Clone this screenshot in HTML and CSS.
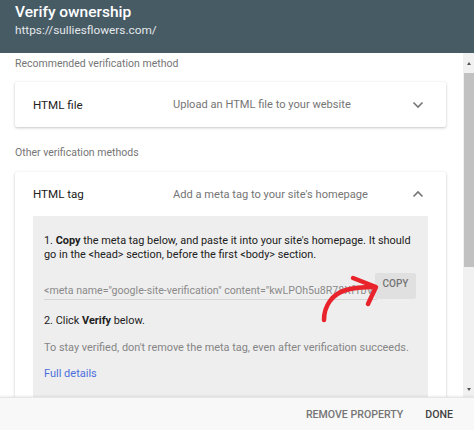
FILE: index.html
```html
<!DOCTYPE html>
<html>
<head>
<meta charset="utf-8">
<link rel="stylesheet" href="styles.css">
</head>
<body>
<div class="dialog">
  <header class="header">
    <div class="title">Verify ownership</div>
    <div class="subtitle">https://sulliesflowers.com/</div>
  </header>
  <div class="main">
    <div class="content">
      <div class="section-label">Recommended verification method</div>
      <div class="card">
        <div class="card-head">
          <span class="method">HTML file</span>
          <span class="desc">Upload an HTML file to your website</span>
          <svg class="chev" width="12" height="8" viewBox="0 0 12 8"><path d="M1.5 1.5 L6 6 L10.5 1.5" fill="none" stroke="#757575" stroke-width="1.6"/></svg>
        </div>
      </div>
      <div class="section-label second">Other verification methods</div>
      <div class="card open">
        <div class="card-head">
          <span class="method">HTML tag</span>
          <span class="desc">Add a meta tag to your site's homepage</span>
          <svg class="chev" width="12" height="8" viewBox="0 0 12 8"><path d="M1.5 6.5 L6 2 L10.5 6.5" fill="none" stroke="#757575" stroke-width="1.6"/></svg>
        </div>
        <div class="panel">
          <p class="step">1. <b>Copy</b> the meta tag below, and paste it into your site's homepage. It should go in the &lt;head&gt; section, before the first &lt;body&gt; section.</p>
          <div class="copy-row">
            <div class="field">&lt;meta name="google-site-verification" content="kwLPOh5u8R78Xf1bV0lqT" /&gt;</div>
            <button class="copy">COPY</button>
            <svg class="arrow" width="70" height="50" viewBox="0 0 70 50"><path d="M12 46 C12 32 20 20 34 16 C44 13 54 13 62 13" fill="none" stroke="#e8232b" stroke-width="4.5" stroke-linecap="round"/><path d="M41 4 L64 13 L56 30" fill="none" stroke="#e8232b" stroke-width="4.5" stroke-linecap="round" stroke-linejoin="round"/></svg>
          </div>
          <p class="step">2. Click <b>Verify</b> below.</p>
          <p class="note">To stay verified, don't remove the meta tag, even after verification succeeds.</p>
          <a class="details">Full details</a>
        </div>
      </div>
    </div>
    <div class="scrollbar">
      <div class="sb-arrow up"></div>
      <div class="sb-thumb"></div>
      <div class="sb-space"></div>
      <div class="sb-arrow down"></div>
    </div>
  </div>
  <footer class="footer">
    <span class="btn">REMOVE PROPERTY</span>
    <span class="btn done">DONE</span>
  </footer>
</div>
</body>
</html>
```
FILE: styles.css
```css
html, body {
  margin: 0;
  padding: 0;
}
body {
  width: 474px;
  height: 430px;
  overflow: hidden;
  font-family: Roboto, "Liberation Sans", sans-serif;
  background: #fff;
}
.dialog {
  display: flex;
  flex-direction: column;
  height: 430px;
}
.header {
  height: 53px;
  flex: none;
  background: #475b65;
  padding: 2px 15px 0;
  box-sizing: border-box;
  color: #fff;
}
.title {
  font-size: 15.5px;
  font-weight: 500;
  line-height: 21px;
}
.subtitle {
  font-size: 11.8px;
  line-height: 15px;
  color: #e3e8ea;
}
.main {
  flex: 1;
  display: flex;
  overflow: hidden;
}
.content {
  flex: 1;
  padding: 4px 17px 0 15px;
  overflow: hidden;
}
.section-label {
  font-size: 10.5px;
  color: #757575;
  line-height: 14px;
  margin-bottom: 11px;
}
.section-label.second {
  margin-top: 19px;
  margin-bottom: 12px;
}
.card {
  background: #fff;
  border-radius: 2px;
  box-shadow: 0 1px 3px rgba(0,0,0,0.22), 0 0 1px rgba(0,0,0,0.08);
}
.card-head {
  display: grid;
  grid-template-columns: 140px 1fr auto;
  align-items: center;
  height: 45px;
  padding: 0 22px 0 18px;
}
.method {
  font-size: 11.6px;
  color: #212121;
}
.desc {
  font-size: 11.1px;
  color: #757575;
}
.chev {
  display: block;
}
.card.open .card-head {
  height: 44px;
}
.panel {
  margin: 0 18px;
  background: #eeeeee;
  padding: 18px 10px 14px 11px;
}
.step {
  margin: 0;
  font-size: 10.9px;
  line-height: 13.5px;
  color: #212121;
}
.step b {
  font-weight: 700;
}
.copy-row {
  position: relative;
  display: flex;
  align-items: flex-start;
  margin: 12px 2px 14px 0;
}
.field {
  flex: 1;
  overflow: hidden;
  white-space: nowrap;
  font-size: 10.6px;
  color: #8a8a8a;
  line-height: 14px;
  padding-top: 11px;
  border-bottom: 1px solid #d5d5d5;
  height: 15px;
  margin-right: -2px;
}
.copy {
  flex: none;
  width: 41px;
  height: 26px;
  border: none;
  background: #e0e0e0;
  color: #757575;
  font-family: Roboto, "Liberation Sans", sans-serif;
  font-size: 10px;
  font-weight: 500;
  padding: 0 0 5px;
  border-radius: 2px;
  position: relative;
}
.arrow {
  position: absolute;
  right: 34px;
  top: 1px;
}
.note {
  margin: 13px 0 0;
  font-size: 10.9px;
  line-height: 14px;
  color: #858585;
}
.details {
  display: block;
  margin-top: 12px;
  font-size: 11px;
  color: #4a6fdc;
  height: 28px;
}
.scrollbar {
  width: 11px;
  flex: none;
  background: #f1f1f1;
  display: flex;
  flex-direction: column;
}
.sb-arrow {
  flex: none;
  display: flex;
  justify-content: center;
  align-items: center;
}
.sb-arrow::before {
  content: "";
  border-left: 2.5px solid transparent;
  border-right: 2.5px solid transparent;
}
.sb-arrow.up::before {
  border-bottom: 3px solid #555;
}
.sb-arrow.down::before {
  border-top: 3px solid #555;
}
.sb-arrow.up {
  height: 20px;
}
.sb-arrow.down {
  height: 9px;
  align-items: flex-start;
}
.sb-thumb {
  height: 194px;
  flex: none;
  background: #c1c1c1;
  margin-left: 1px;
}
.sb-space {
  flex: 1;
}
.footer {
  height: 33px;
  flex: none;
  background: #f8f8f8;
  box-shadow: 0 -1px 2px rgba(0,0,0,0.08);
  border-top: 1px solid #e6e6e6;
  box-sizing: border-box;
  display: flex;
  align-items: center;
  justify-content: flex-end;
  padding-right: 21px;
  gap: 22px;
  position: relative;
}
.btn {
  font-size: 10.6px;
  font-weight: 500;
  color: #757575;
}
.btn.done {
  color: #424242;
}
```
